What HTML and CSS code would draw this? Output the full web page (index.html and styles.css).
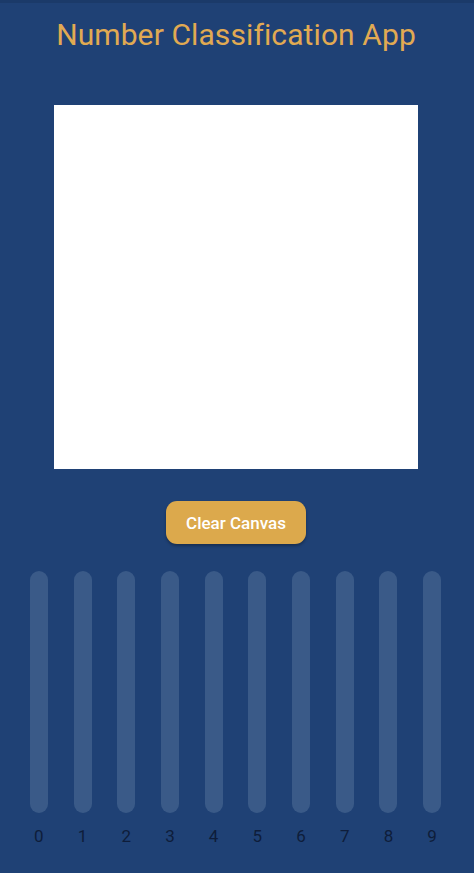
FILE: index.html
```html
<!DOCTYPE html>
<html>
<head>
<meta charset="utf-8">
<link rel="stylesheet" href="styles.css">
</head>
<body>
<div class="app">
  <h1 class="title">Number Classification App</h1>
  <div class="canvas"></div>
  <button class="clear-btn">Clear Canvas</button>
  <div class="bars">
    <div class="col"><div class="bar"></div><span class="label">0</span></div>
    <div class="col"><div class="bar"></div><span class="label">1</span></div>
    <div class="col"><div class="bar"></div><span class="label">2</span></div>
    <div class="col"><div class="bar"></div><span class="label">3</span></div>
    <div class="col"><div class="bar"></div><span class="label">4</span></div>
    <div class="col"><div class="bar"></div><span class="label">5</span></div>
    <div class="col"><div class="bar"></div><span class="label">6</span></div>
    <div class="col"><div class="bar"></div><span class="label">7</span></div>
    <div class="col"><div class="bar"></div><span class="label">8</span></div>
    <div class="col"><div class="bar"></div><span class="label">9</span></div>
  </div>
</div>
</body>
</html>
```
FILE: styles.css
```css
html, body {
  margin: 0;
  padding: 0;
  height: 100%;
}
body {
  background: #1f4175;
  font-family: Roboto, "Liberation Sans", sans-serif;
}
.app {
  display: flex;
  flex-direction: column;
  align-items: center;
  height: 873px;
  box-sizing: border-box;
  border-top: 3px solid #1b3a69;
  padding-right: 2px;
}
.title {
  margin: 15px 0 0;
  font-size: 30px;
  font-weight: 400;
  line-height: 34px;
  color: #e1aa52;
  letter-spacing: 0.1px;
}
.canvas {
  margin-top: 53px;
  width: 364px;
  height: 364px;
  background: #ffffff;
}
.clear-btn {
  margin-top: 32px;
  width: 140px;
  height: 43px;
  border: none;
  border-radius: 11px;
  background: #dca94c;
  color: #ffffff;
  font-family: Roboto, "Liberation Sans", sans-serif;
  font-size: 17px;
  font-weight: 500;
  box-shadow: 0 2px 3px rgba(0, 0, 0, 0.3);
  padding: 0;
}
.bars {
  margin-top: 27px;
  width: 100%;
  box-sizing: border-box;
  padding: 0 18px 0 17px;
  display: grid;
  grid-template-columns: repeat(10, 1fr);
}
.col {
  display: flex;
  flex-direction: column;
  align-items: center;
}
.bar {
  width: 18px;
  height: 242px;
  border-radius: 9px;
  background: #3a5a88;
}
.label {
  margin-top: 13px;
  font-size: 17px;
  line-height: 20px;
  color: #0e1d3a;
}
```
